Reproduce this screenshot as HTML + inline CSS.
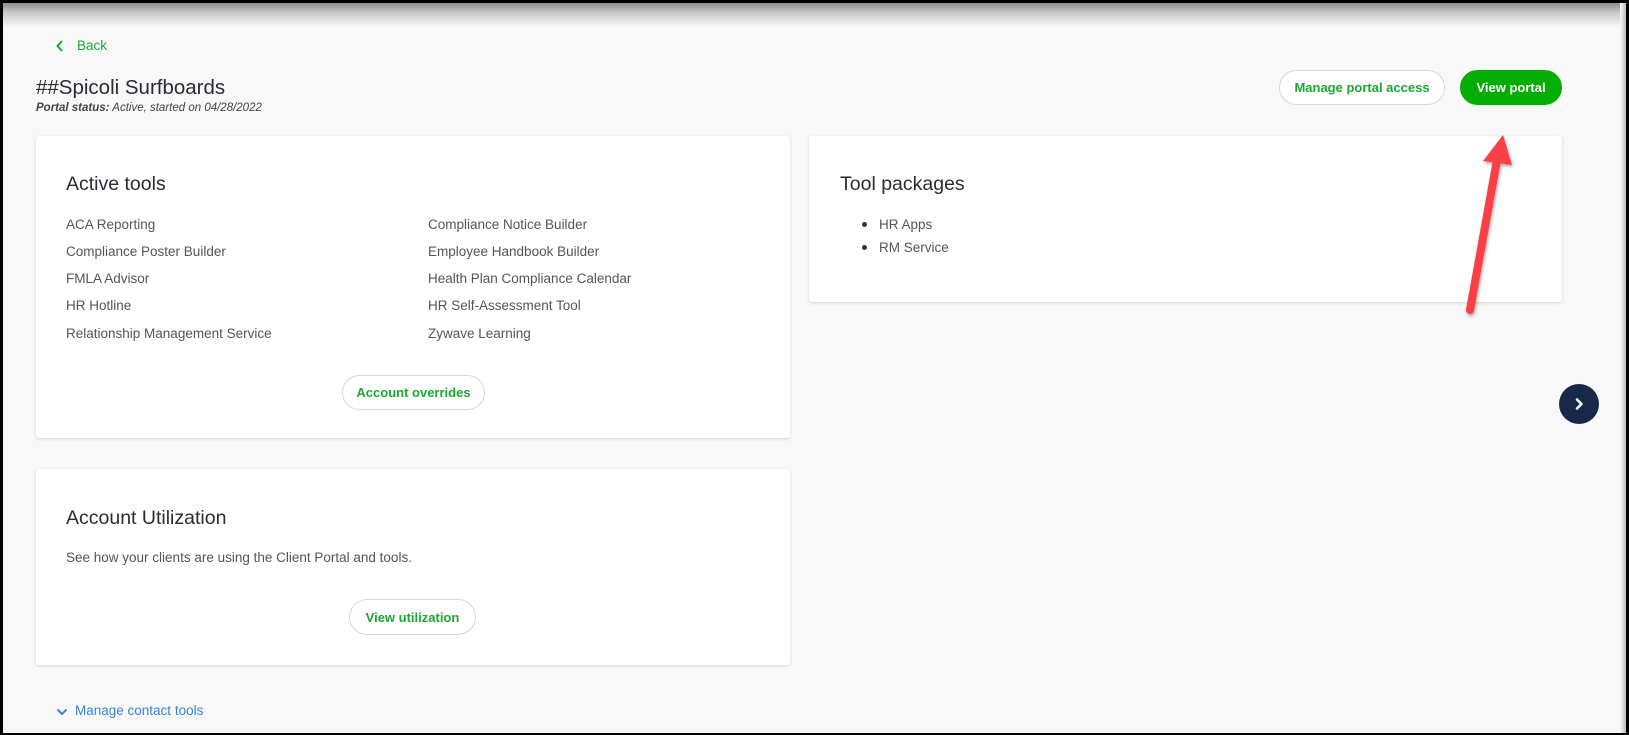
<!DOCTYPE html>
<html><head><meta charset="utf-8"><style>
*{box-sizing:border-box;margin:0;padding:0}
html,body{width:1629px;height:735px;overflow:hidden}
body{background:#000;font-family:"Liberation Sans",sans-serif;position:relative}
#page{position:absolute;left:3px;top:3px;width:1623px;height:730px;background:#f8f8f8;overflow:hidden}
#topshade{position:absolute;left:0;top:0;width:100%;height:24px;background:linear-gradient(#8f8f8f,#c9c9c9 40%,#f8f8f8)}
#rshade{position:absolute;right:0;top:0;width:6px;height:100%;background:linear-gradient(90deg,#f8f8f8,#bdbdbd)}
.a{position:absolute;white-space:nowrap}
.card{position:absolute;background:#fff;border-radius:3px;box-shadow:0 1px 3px rgba(0,0,0,.15)}
.h{font-size:19.5px;color:#2b2b33}
.t{font-size:13.5px;color:#54545c}
.btn{position:absolute;border:1px solid #d6d6dc;border-radius:18px;background:#fff;color:#1aa832;font-weight:bold;font-size:13px;display:flex;align-items:center;justify-content:center}
</style></head><body><div id="page">
<div id="topshade"></div><div id="rshade"></div>
<svg class="a" style="left:52px;top:36px" width="10" height="14" viewBox="0 0 10 14"><path d="M7 2L2.5 7 7 12" fill="none" stroke="#1aa832" stroke-width="2"/></svg>
<div class="a" style="left:74px;top:35px;font-size:13.5px;color:#1aa832">Back</div>
<div class="a" style="left:33px;top:73px;font-size:20.5px;color:#2b2b33">##Spicoli Surfboards</div>
<div class="a" style="left:33px;top:99px;font-size:11.5px;color:#444;font-style:italic"><b>Portal status:</b> Active, started on 04/28/2022</div>
<div class="btn" style="left:1276px;top:67px;width:166px;height:35px">Manage portal access</div>
<div class="btn" style="left:1457px;top:67px;width:102px;height:35px;background:#04ad04;border-color:#04ad04;color:#fff">View portal</div>

<div class="card" style="left:33px;top:133px;width:754px;height:302px"></div>
<div class="a h" style="left:63px;top:170px">Active tools</div>
<div class="a t" style="left:63px;top:214px">ACA Reporting</div>
<div class="a t" style="left:63px;top:241px">Compliance Poster Builder</div>
<div class="a t" style="left:63px;top:268px">FMLA Advisor</div>
<div class="a t" style="left:63px;top:295px">HR Hotline</div>
<div class="a t" style="left:63px;top:323px">Relationship Management Service</div>
<div class="a t" style="left:425px;top:214px">Compliance Notice Builder</div>
<div class="a t" style="left:425px;top:241px">Employee Handbook Builder</div>
<div class="a t" style="left:425px;top:268px">Health Plan Compliance Calendar</div>
<div class="a t" style="left:425px;top:295px">HR Self-Assessment Tool</div>
<div class="a t" style="left:425px;top:323px">Zywave Learning</div>
<div class="btn" style="left:339px;top:372px;width:143px;height:35px">Account overrides</div>

<div class="card" style="left:33px;top:466px;width:754px;height:196px"></div>
<div class="a h" style="left:63px;top:504px">Account Utilization</div>
<div class="a t" style="left:63px;top:547px">See how your clients are using the Client Portal and tools.</div>
<div class="btn" style="left:346px;top:596px;width:127px;height:36px">View utilization</div>

<div class="card" style="left:806px;top:133px;width:753px;height:166px"></div>
<div class="a h" style="left:837px;top:170px">Tool packages</div>
<div class="a" style="left:859px;top:219px;width:5px;height:5px;border-radius:50%;background:#333"></div>
<div class="a" style="left:859px;top:242px;width:5px;height:5px;border-radius:50%;background:#333"></div>
<div class="a t" style="left:876px;top:214px">HR Apps</div>
<div class="a t" style="left:876px;top:237px">RM Service</div>

<div class="a" style="left:1556px;top:381px;width:40px;height:40px;border-radius:50%;background:#17284a"></div>
<svg class="a" style="left:1568px;top:393px" width="16" height="16" viewBox="0 0 16 16"><path d="M6 3.5L10.5 8 6 12.5" fill="none" stroke="#fff" stroke-width="2.6" stroke-linecap="round" stroke-linejoin="round"/></svg>

<svg class="a" style="left:0;top:0" width="1623" height="730">
<defs><filter id="sh" x="-50%" y="-50%" width="200%" height="200%"><feDropShadow dx="1" dy="2" stdDeviation="1.5" flood-color="#000" flood-opacity=".35"/></filter></defs>
<g filter="url(#sh)" transform="translate(-3,-3)">
<line x1="1470" y1="310" x2="1497" y2="160" stroke="#fa4147" stroke-width="8" stroke-linecap="round"/>
<polygon points="1503,135 1483,161 1512,165" fill="#fa4147"/>
</g></svg>

<svg class="a" style="left:53px;top:704px" width="12" height="10" viewBox="0 0 12 10"><path d="M1.5 2.5L6 7 10.5 2.5" fill="none" stroke="#3a82d8" stroke-width="2"/></svg>
<div class="a" style="left:72px;top:700px;font-size:13.5px;color:#3a82d8">Manage contact tools</div>
</div></body></html>
